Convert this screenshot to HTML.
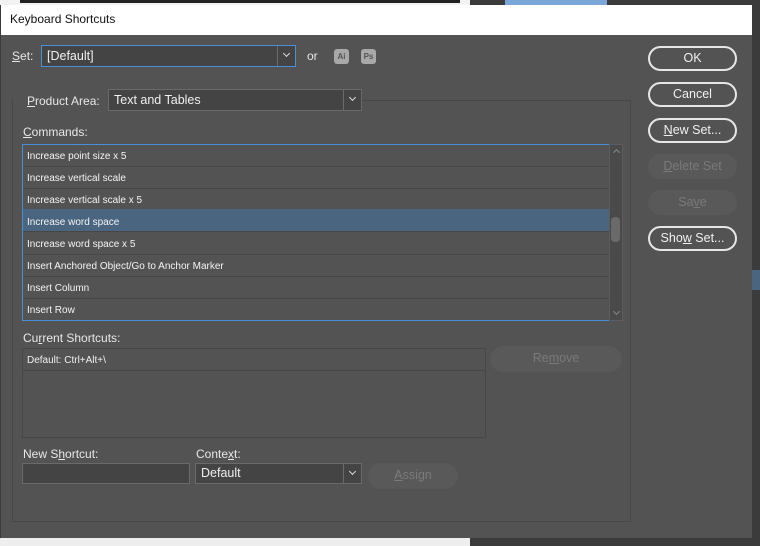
<!DOCTYPE html>
<html><head><style>
*{margin:0;padding:0;box-sizing:border-box}
body{width:760px;height:546px;overflow:hidden;background:#3b3b3b;font-family:"Liberation Sans",sans-serif;position:relative}
.a{position:absolute}
.t{color:#e8e8e8;font-size:12px;white-space:nowrap}
.s{font-size:10px;color:#f0f0f0}
.btn{position:absolute;left:648px;width:89px;height:25px;border:2px solid #e6e6e6;border-radius:13px;color:#f0f0f0;font-size:12.5px;text-align:center;line-height:21px}
.dis{border:none;background:#595959;color:#7a7a7a;line-height:25px}
.dd{position:absolute;background:#444;border:1px solid #6a6a6a;color:#f0f0f0;font-size:12.5px;padding-left:5px}
.arr{position:absolute;right:0;top:0;bottom:0;width:18px;border-left:1px solid #6a6a6a}
.arr:after{content:"";position:absolute;left:6px;top:5px;width:4px;height:4px;border-right:1px solid #ddd;border-bottom:1px solid #ddd;transform:rotate(45deg)}
.row{position:absolute;left:0;width:586px;height:22px;border-bottom:1px solid #474747;font-size:10px;color:#f4f4f4;padding:6px 0 0 4px}
u{text-decoration:underline}
</style></head><body>
<div class="a" style="left:0;top:0;width:470px;height:5px;background:#f2f2f2"></div>
<div class="a" style="left:20px;top:0;width:440px;height:3px;background:#222"></div>
<div class="a" style="left:505px;top:0;width:102px;height:5px;background:#7ba6d8"></div>
<div class="a" style="left:0;top:538px;width:470px;height:8px;background:#eee"></div>
<div class="a" style="left:752px;top:270px;width:8px;height:20px;background:#4a6580"></div>
<!-- dialog -->
<div class="a" style="left:1px;top:5px;width:751px;height:533px;background:#535353"></div>
<div class="a" style="left:1px;top:5px;width:751px;height:30px;background:#fff"></div>
<div class="a" style="left:10px;top:12px;font-size:12px;color:#111">Keyboard Shortcuts</div>

<div class="a t" style="left:12px;top:49px"><u>S</u>et:</div>
<div class="dd" style="left:41px;top:45px;width:255px;height:22px;border-color:#4a90d9;line-height:20px">[Default]<div class="arr"></div></div>
<div class="a t" style="left:307px;top:49px">or</div>
<div class="a" style="left:334px;top:49px;width:15px;height:15px;background:#a8a8a8;border-radius:3px;font-size:8px;color:#555;text-align:center;line-height:15px;font-weight:bold">Ai</div>
<div class="a" style="left:361px;top:49px;width:15px;height:15px;background:#a8a8a8;border-radius:3px;font-size:8px;color:#555;text-align:center;line-height:15px;font-weight:bold">Ps</div>

<div class="a" style="left:12px;top:100px;width:619px;height:422px;border:1px solid #474747"></div>
<div class="a" style="left:13px;top:89px;width:95px;height:22px;background:#535353"></div>
<div class="a t" style="left:27px;top:94px"><u>P</u>roduct Area:</div>
<div class="dd" style="left:108px;top:89px;width:254px;height:22px;line-height:20px">Text and Tables<div class="arr"></div></div>
<div class="a t" style="left:23px;top:125px"><u>C</u>ommands:</div>

<div class="a" style="left:22px;top:144px;width:588px;height:177px;border:1px solid #4a90d9;background:#535353;overflow:hidden">
<div class="row" style="top:0">Increase point size x 5</div>
<div class="row" style="top:22px">Increase vertical scale</div>
<div class="row" style="top:44px">Increase vertical scale x 5</div>
<div class="row" style="top:64px;height:23px;padding-top:8px;background:#4a6580">Increase word space</div>
<div class="row" style="top:88px">Increase word space x 5</div>
<div class="row" style="top:110px">Insert Anchored Object/Go to Anchor Marker</div>
<div class="row" style="top:132px">Insert Column</div>
<div class="row" style="top:154px;border:none">Insert Row</div>
</div>
<div class="a" style="left:609px;top:144px;width:14px;height:177px;background:#4a4a4a;border:1px solid #5c5c5c"></div>
<div class="a" style="left:611px;top:217px;width:9px;height:25px;background:#6a6a6a;border-radius:4px"></div>
<div class="a" style="left:614px;top:150px;width:5px;height:5px;border-left:1px solid #888;border-top:1px solid #888;transform:rotate(45deg)"></div>
<div class="a" style="left:614px;top:309px;width:5px;height:5px;border-right:1px solid #888;border-bottom:1px solid #888;transform:rotate(45deg)"></div>

<div class="a t" style="left:23px;top:331px">Cu<u>r</u>rent Shortcuts:</div>
<div class="a" style="left:22px;top:348px;width:464px;height:90px;border:1px solid #474747"></div>
<div class="a" style="left:22px;top:370px;width:464px;height:1px;background:#474747"></div>
<div class="a s" style="left:27px;top:355px">Default: Ctrl+Alt+\</div>
<div class="btn dis" style="left:490px;top:346px;width:132px;height:26px;border-radius:13px">Re<u>m</u>ove</div>

<div class="a t" style="left:23px;top:447px">New S<u>h</u>ortcut:</div>
<div class="a" style="left:22px;top:463px;width:168px;height:21px;background:#444;border:1px solid #6a6a6a"></div>
<div class="a t" style="left:196px;top:447px">Conte<u>x</u>t:</div>
<div class="dd" style="left:195px;top:463px;width:167px;height:21px;line-height:19px">Default<div class="arr"></div></div>
<div class="btn dis" style="left:368px;top:463px;width:90px;height:26px"><u>A</u>ssign</div>

<div class="btn" style="top:46px">OK</div>
<div class="btn" style="top:82px">Cancel</div>
<div class="btn" style="top:118px"><u>N</u>ew Set...</div>
<div class="btn dis" style="top:154px"><u>D</u>elete Set</div>
<div class="btn dis" style="top:190px">Sa<u>v</u>e</div>
<div class="btn" style="top:226px">Sho<u>w</u> Set...</div>
</body></html>
